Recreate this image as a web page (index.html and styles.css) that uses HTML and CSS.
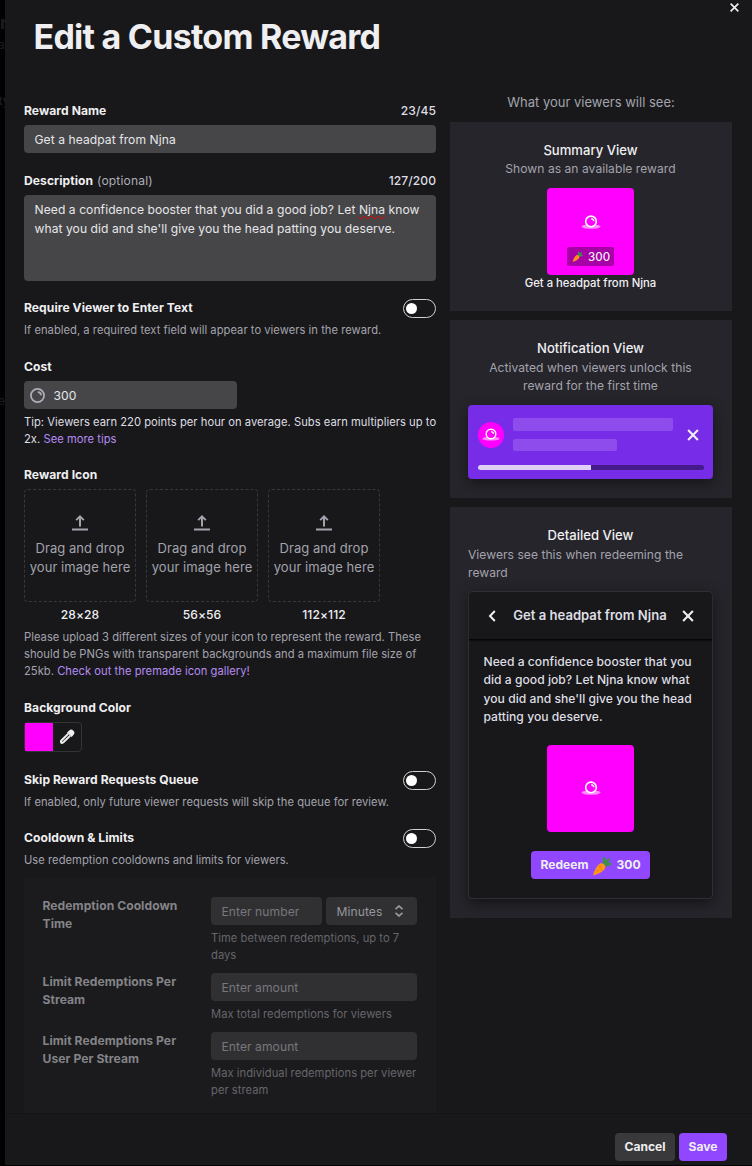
FILE: index.html
```html
<!DOCTYPE html>
<html lang="en">
<head>
    <meta charset="UTF-8">
    <meta name="viewport" content="width=device-width, initial-scale=1.0">
    <title>Edit a Custom Reward</title>
    <link rel="stylesheet" href="styles.css">
</head>
<body>
    <svg class="sprite" width="0" height="0">
        <symbol id="close" viewBox="0 0 20 20"><path d="M3 3l14 14M17 3L3 17" fill="none" stroke="currentColor" stroke-width="3"/></symbol>
        <symbol id="upload" viewBox="0 0 16 16"><path d="M8 12V2M4.200 5.600L8 1.800l3.800 3.800M0 15h16" fill="none" stroke="currentColor" stroke-width="2"/></symbol>
        <symbol id="orb" viewBox="0 0 20 14">
            <ellipse cx="10" cy="11.600" rx="9.600" ry="2.200" fill="#fff" opacity=".55"/>
            <circle cx="10" cy="6.400" r="5.300" fill="#f0f" stroke="#fff" stroke-width="1.600"/>
            <path d="M10.200 3.700a2.800 2.800 0 0 1 2.600 2.600" fill="none" stroke="#fff" stroke-width="1.400"/>
        </symbol>
        <symbol id="carrot" viewBox="0 0 20 20">
            <path d="M11 8C10 4 11 1 12 .5c1.500 1 2 3 1.500 4.500C15 3 17 2 18 2.500c0 2-1 3-2.500 4 2-.3 3.500 0 4.500 1.500-2 2-5 2.500-7.500 2z" fill="#3e8e4e"/>
            <path d="M1 19.500C2 15 4.500 10 8 7.500c3-1.500 6.500 2 5 5C11 16 5 18.500 1 19.500z" fill="#ff9419"/>
            <path d="M7 9.500l2 1.500M10.500 14.500l-2-1.500M4.500 14l1.500 1" stroke="#d96c10" stroke-width=".8"/>
        </symbol>
    </svg>

    <div class="backdrop">
        <span class="ghost ghost-1">r</span>
        <span class="ghost ghost-2">a</span>
        <span class="ghost ghost-3">ty</span>
        <span class="ghost ghost-4">e</span>
    </div>

    <div class="modal">
        <header class="modal-header">
            <h1>Edit a Custom Reward</h1>
            <svg class="modal-close"><use href="#close"/></svg>
        </header>

        <main class="modal-body">
            <form class="form">
                <section class="field name">
                    <div class="label-row"><label>Reward Name</label><span class="count">23/45</span></div>
                    <div class="input">Get a headpat from Njna</div>
                </section>

                <section class="field description">
                    <div class="label-row"><label>Description <em>(optional)</em></label><span class="count">127/200</span></div>
                    <div class="input textarea">Need a confidence booster that you did a good job? Let <span class="misspelled">Njna</span> know<br>what you did and she'll give you the head patting you deserve.</div>
                </section>

                <section class="field require">
                    <div class="label-row"><label>Require Viewer to Enter Text</label><span class="toggle"></span></div>
                    <p class="hint">If enabled, a required text field will appear to viewers in the reward.</p>
                </section>

                <section class="field cost">
                    <label>Cost</label>
                    <div class="input cost-input">
                        <svg viewBox="0 0 16 16" width="15" height="15"><circle cx="8" cy="8" r="7" fill="none" stroke="#adadb8" stroke-width="1.900"/><path d="M8.300 4.300a3.500 3.500 0 0 1 3.400 3.400" fill="none" stroke="#adadb8" stroke-width="1.900"/></svg>
                        300
                    </div>
                    <p class="tip">Tip: Viewers earn 220 points per hour on average. Subs earn multipliers up to<br>2x. <a>See more tips</a></p>
                </section>

                <section class="field icons">
                    <label>Reward Icon</label>
                    <div class="uploads">
                        <div class="upload">
                            <div class="dropzone"><svg><use href="#upload"/></svg>Drag and drop<br>your image here</div>
                            <span>28×28</span>
                        </div>
                        <div class="upload">
                            <div class="dropzone"><svg><use href="#upload"/></svg>Drag and drop<br>your image here</div>
                            <span>56×56</span>
                        </div>
                        <div class="upload">
                            <div class="dropzone"><svg><use href="#upload"/></svg>Drag and drop<br>your image here</div>
                            <span>112×112</span>
                        </div>
                    </div>
                    <p class="hint">Please upload 3 different sizes of your icon to represent the reward. These<br>should be PNGs with transparent backgrounds and a maximum file size of<br>25kb. <a>Check out the premade icon gallery!</a></p>
                </section>

                <section class="field color">
                    <label>Background Color</label>
                    <div class="color-picker">
                        <span class="swatch"></span>
                        <svg viewBox="0 0 16 16" width="16" height="16"><path d="M9.300 4.600L2.400 11.500q-.9 1-.3 1.900t2 .1L11.300 6.600" fill="none" stroke="#efeff1" stroke-width="2" stroke-linejoin="round"/><path d="M8 3.400L10 1.700a3 3 0 0 1 4.400 4.300L12.700 8z" fill="#efeff1"/></svg>
                    </div>
                </section>

                <section class="field skip">
                    <div class="label-row"><label>Skip Reward Requests Queue</label><span class="toggle"></span></div>
                    <p class="hint">If enabled, only future viewer requests will skip the queue for review.</p>
                </section>

                <section class="field cooldown">
                    <div class="label-row"><label>Cooldown &amp; Limits</label><span class="toggle"></span></div>
                    <p class="hint">Use redemption cooldowns and limits for viewers.</p>
                </section>

                <section class="limits">
                    <label>Redemption Cooldown<br>Time</label>
                    <div>
                        <div class="cooldown-inputs">
                            <div class="input">Enter number</div>
                            <div class="input select">Minutes
                                <svg viewBox="0 0 10 12" width="10" height="12"><path d="M1.500 4.200L5 1l3.500 3.200M1.500 7.800L5 11l3.500-3.200" fill="none" stroke="currentColor" stroke-width="1.700"/></svg>
                            </div>
                        </div>
                        <p class="hint">Time between redemptions, up to 7<br>days</p>
                    </div>
                    <label>Limit Redemptions Per<br>Stream</label>
                    <div>
                        <div class="input">Enter amount</div>
                        <p class="hint">Max total redemptions for viewers</p>
                    </div>
                    <label>Limit Redemptions Per<br>User Per Stream</label>
                    <div>
                        <div class="input">Enter amount</div>
                        <p class="hint">Max individual redemptions per viewer<br>per stream</p>
                    </div>
                </section>
            </form>

            <aside class="preview">
                <p class="preview-title">What your viewers will see:</p>

                <section class="card summary">
                    <h2>Summary View</h2>
                    <p>Shown as an available reward</p>
                    <div class="tile">
                        <svg class="orb"><use href="#orb"/></svg>
                        <span class="price"><svg><use href="#carrot"/></svg>300</span>
                    </div>
                    <strong>Get a headpat from Njna</strong>
                </section>

                <section class="card notification">
                    <h2>Notification View</h2>
                    <p>Activated when viewers unlock this<br>reward for the first time</p>
                    <div class="toast">
                        <div class="toast-row">
                            <span class="avatar"><svg><use href="#orb"/></svg></span>
                            <div class="lines"><span></span><span></span></div>
                            <svg class="toast-close"><use href="#close"/></svg>
                        </div>
                        <div class="progress"><span></span></div>
                    </div>
                </section>

                <section class="card detailed">
                    <h2>Detailed View</h2>
                    <p>Viewers see this when redeeming the<br>reward</p>
                    <div class="popup">
                        <div class="popup-header">
                            <svg class="back" viewBox="0 0 8 12"><path d="M6.800 1L2 6l4.800 5" fill="none" stroke="currentColor" stroke-width="2"/></svg>
                            <h3>Get a headpat from Njna</h3>
                            <svg class="popup-close"><use href="#close"/></svg>
                        </div>
                        <div class="popup-text">Need a confidence booster that you<br>did a good job? Let Njna know what<br>you did and she'll give you the head<br>patting you deserve.</div>
                        <div class="tile"><svg class="orb"><use href="#orb"/></svg></div>
                        <div class="redeem">Redeem <svg><use href="#carrot"/></svg> 300</div>
                    </div>
                </section>
            </aside>
        </main>

        <footer class="modal-footer">
            <span class="button">Cancel</span>
            <span class="button primary">Save</span>
        </footer>
    </div>
</body>
</html>
```

FILE: styles.css
```css
* {
    box-sizing: border-box;
}
body {
    margin: 0;
    height: 1166px;
    overflow: hidden;
    display: flex;
    background-color: #020203;
    font-family: Inter, sans-serif;
    font-size: 12.1px;
    line-height: 18px;
    color: #efeff1;
}
h1, h2, h3, p {
    margin: 0;
}
svg {
    display: block;
    flex: none;
}
a {
    color: #b58cf2;
}
.sprite {
    position: absolute;
}
.backdrop {
    position: relative;
    width: 5px;
    flex: none;
    overflow: hidden;
    color: #1c1c1f;
}
.ghost {
    position: absolute;
    left: 0;
}
.ghost-1 {
    top: 14px;
    font-size: 18px;
    font-weight: 700;
}
.ghost-2 {
    top: 36px;
    left: -2px;
}
.ghost-3 {
    top: 92px;
    left: -2px;
    font-weight: 700;
}
.ghost-4 {
    top: 392px;
    left: -2px;
}
.modal {
    flex: 1;
    height: 1165px;
    background-color: #18181a;
    display: flex;
    flex-direction: column;
}
.modal-header {
    height: 102px;
    padding: 14px 12px 0 28.5px;
    display: flex;
    justify-content: space-between;
    flex: none;
}
h1 {
    font-size: 34px;
    line-height: 45px;
    letter-spacing: -0.75px;
    font-weight: 700;
}
.modal-close {
    width: 11px;
    height: 11px;
    margin-top: -12px;
}
.modal-body {
    display: flex;
    gap: 14px;
    padding: 0 20px 0 19px;
    height: 1011px;
    flex: none;
}

/* form */
.form {
    width: 412px;
    letter-spacing: 0.06px;
}
label {
    display: block;
    font-weight: 700;
}
label em {
    color: #adadb8;
    font-style: normal;
    font-weight: 400;
    letter-spacing: 0.15px;
    margin-left: 1px;
}
.label-row {
    display: flex;
    justify-content: space-between;
    height: 18px;
}
.count {
    font-weight: 500;
    color: #dedee3;
}
.input {
    height: 28px;
    margin-top: 5px;
    padding: 0 10.5px;
    border-radius: 4px;
    background-color: #464648;
    line-height: 29px;
    white-space: nowrap;
    color: #e6e6ea;
}
.textarea {
    height: 86px;
    padding-top: 5px;
    line-height: 19px;
}
.misspelled {
    text-decoration: underline wavy #e00 1px;
    text-underline-offset: 1px;
    text-decoration-skip-ink: none;
}
.hint, .tip {
    font-size: 11.2px;
    line-height: 17px;
    letter-spacing: 0.03px;
    white-space: nowrap;
}
.tip {
    color: #dedee3;
}
.hint {
    color: #a3a3ad;
}
.toggle {
    width: 33px;
    height: 19px;
    padding: 3px 2px;
    border: 1px solid #d0d0d2;
    border-radius: 10px;
}
.toggle::before {
    content: "";
    display: block;
    width: 11px;
    height: 11px;
    border-radius: 50%;
    background-color: #fff;
}
.description {
    margin-top: 19px;
}
.require {
    margin-top: 18px;
}
.require .hint, .skip .hint, .cooldown .hint {
    padding-top: 5px;
}
.cost {
    margin-top: 19px;
}
.cost-input {
    width: 213px;
    padding: 0 6px;
    display: flex;
    align-items: center;
    gap: 8.5px;
}
.tip {
    padding-top: 5px;
}
.icons {
    margin-top: 18px;
}
.uploads {
    display: flex;
    gap: 10px;
    margin-top: 5px;
}
.upload {
    width: 112px;
    text-align: center;
    font-weight: 500;
}
.upload > span {
    display: block;
    margin-top: 4px;
}
.dropzone {
    height: 113px;
    border: 1px dashed #38383c;
    border-radius: 4px;
    padding-top: 24px;
    color: #a3a3ad;
    font-size: 13px;
    font-weight: 400;
    line-height: 19px;
    white-space: nowrap;
}
.dropzone svg {
    width: 16px;
    height: 17px;
    margin: 0 auto 8px;
}
.icons .hint {
    padding-top: 5px;
}
.color {
    margin-top: 19px;
}
.color-picker {
    width: 58px;
    height: 30px;
    margin-top: 5px;
    padding-right: 6px;
    border: 1px solid #343438;
    border-radius: 4px;
    display: flex;
    align-items: center;
    justify-content: space-between;
}
.swatch {
    width: 28px;
    height: 28px;
    background-color: #f0f;
}
.skip {
    margin-top: 19px;
}
.cooldown {
    margin-top: 18px;
}
.limits {
    height: 235px;
    margin-top: 9px;
    padding: 19px 19px 0 18.5px;
    display: grid;
    grid-template-columns: 168.5px 206px;
    grid-template-rows: 76px 59px 59px;
    background-color: #1b1b1d;
    color: #848488;
}
.limits .input {
    margin-top: 0;
    background-color: #303033;
    color: #77777c;
}
.limits .hint {
    padding-top: 5px;
    color: #66666c;
}
.cooldown-inputs {
    display: grid;
    grid-template-columns: 111px 91px;
    gap: 4px;
}
.limits .select {
    display: flex;
    align-items: center;
    justify-content: space-between;
    padding-right: 13px;
    color: #97979b;
}

/* preview */
.preview {
    width: 282px;
    margin-top: -9px;
    text-align: center;
}
.preview-title {
    font-size: 13px;
    color: #a3a3ad;
}
.card {
    display: flex;
    flex-direction: column;
    align-items: center;
    padding: 19px 19px 0 18px;
    margin-top: 9px;
    background-color: #26252b;
}
.card h2 {
    font-size: 13.1px;
    font-weight: 500;
}
.card p {
    color: #a3a3ad;
    line-height: 18px;
    letter-spacing: 0.03px;
}
.summary {
    height: 189px;
    margin-top: 11px;
}
.summary p {
    padding-top: 1px;
}
.notification {
    height: 178px;
}
.notification p, .detailed p {
    padding-top: 2px;
}
.detailed {
    height: 411px;
}
.detailed p {
    width: 245px;
    text-align: left;
}
.tile {
    width: 87px;
    height: 87px;
    border-radius: 4px;
    background-color: #f0f;
    display: flex;
    flex-direction: column;
    align-items: center;
    flex: none;
}
.summary .tile {
    margin-top: 10px;
}
.orb {
    width: 20px;
    height: 14px;
    margin-top: 27px;
}
.price {
    display: flex;
    align-items: center;
    gap: 5px;
    width: 47px;
    height: 19px;
    margin-top: 18px;
    padding-left: 5px;
    border-radius: 2px;
    background-color: #a600a6;
    font-size: 11.5px;
    font-weight: 500;
}
.price svg {
    width: 11px;
    height: 11px;
}
.summary strong {
    font-size: 11.3px;
    line-height: 17px;
    font-weight: 500;
}
.toast {
    width: 245px;
    height: 74px;
    margin-top: 10px;
    padding: 13px 9px 0 10px;
    border-radius: 4px;
    background-color: #772ce8;
    box-shadow: 0 4px 14px rgba(0,0,0,0.45);
}
.toast-row {
    display: flex;
}
.avatar {
    width: 26px;
    height: 26px;
    margin: 4px 9px 0 0;
    padding: 5px 4px;
    border-radius: 50%;
    background-color: #f0f;
}
.avatar svg {
    width: 18px;
    height: 15px;
}
.lines span {
    display: block;
    width: 160px;
    height: 13px;
    border-radius: 2px;
    background-color: #8d4ceb;
}
.lines span + span {
    width: 104px;
    height: 12px;
    margin-top: 8px;
}
.toast-close {
    width: 14px;
    height: 14px;
    margin: 10px 0 0 13px;
}
.progress {
    height: 5px;
    margin-top: 14px;
    border-radius: 3px;
    overflow: hidden;
    background-color: #451a8b;
}
.progress span {
    display: block;
    width: 50%;
    height: 5px;
    background-color: #e0cff5;
}
.popup {
    width: 245px;
    height: 308px;
    margin-top: 9px;
    border: 1px solid #303034;
    border-radius: 4px;
    background-color: #18181a;
    box-shadow: 0 4px 14px rgba(0,0,0,0.5);
    display: flex;
    flex-direction: column;
    align-items: center;
}
.popup-header {
    width: 243px;
    height: 48px;
    display: flex;
    align-items: center;
    padding: 0 17px 0 19px;
    justify-content: space-between;
    border-bottom: 1px solid #050506;
    box-shadow: 0 1px 1px rgba(0,0,0,0.4);
}
.popup-header h3 {
    margin: -1px 0 0 3px;
    font-size: 13.1px;
    font-weight: 600;
    color: #dedee3;
}
.back {
    width: 8px;
    height: 12px;
}
.popup-close {
    width: 14px;
    height: 14px;
}
.popup-text {
    width: 243px;
    padding: 13px 0 0 14.5px;
    text-align: left;
    line-height: 18.3px;
    letter-spacing: 0.03px;
    font-weight: 500;
    white-space: nowrap;
    color: #dedee3;
}
.popup .tile {
    margin-top: 19px;
}
.popup .orb {
    margin-top: 36px;
}
.redeem, .button {
    height: 28px;
    border-radius: 4px;
    display: flex;
    align-items: center;
    justify-content: center;
    font-weight: 700;
}
.redeem {
    width: 119px;
    margin-top: 19px;
    gap: 4px;
    background-color: #9147ff;
}
.redeem svg {
    width: 20px;
    height: 20px;
    margin-top: 2px;
}

/* footer */
.modal-footer {
    flex: 1;
    display: flex;
    justify-content: flex-end;
    gap: 4px;
    padding: 19px 25px 0;
    border-top: 1px solid #141416;
}
.button {
    width: 60px;
    background-color: #39393c;
}
.primary {
    width: 48px;
    background-color: #9147ff;
}
```
